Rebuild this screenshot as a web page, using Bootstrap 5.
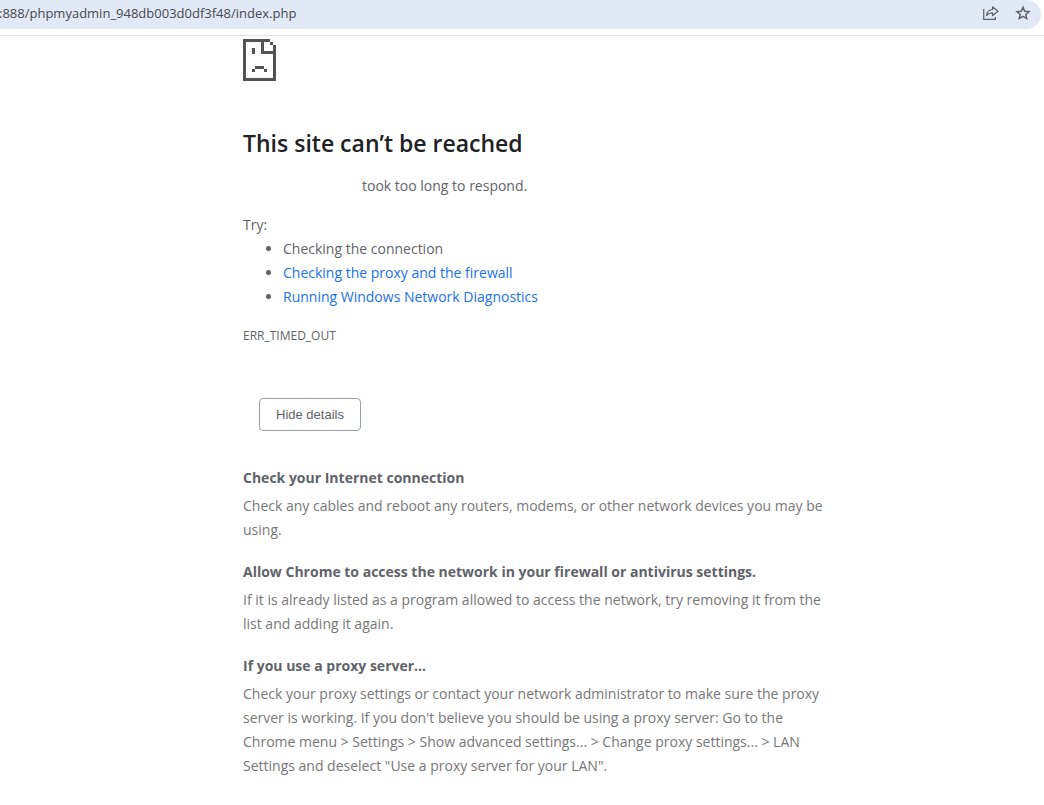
<!DOCTYPE html>
<html lang="en">
<head>
<meta charset="utf-8">
<meta name="viewport" content="width=device-width, initial-scale=1">
<title>This site can’t be reached</title>
<link rel="stylesheet" href="https://cdn.jsdelivr.net/npm/bootstrap@5.3.0/dist/css/bootstrap.min.css">
<style>
  body { font-family: "Open Sans", "Noto Sans", sans-serif; font-size: 14px; line-height: 24px; color: #5f6368; }
  .toolbar { height: 36px; border-bottom: 1px solid #dfe1e5; }
  .omnibox { height: 29px; background: #e1e8f6; border-radius: 0 15px 15px 0; margin-right: 3px; padding: 0 10px 3px 0; }
  .omnibox input { background: transparent; color: #474a4f; font-size: 13px; line-height: 20px; text-indent: -1px; outline: 0; }
  .tool { color: #5f6368; line-height: 0; }
  .page-shell { padding-left: 42px; }
  .error-page { max-width: 600px; padding-top: 3px; }
  .sad-page { display: block; margin-bottom: 48px; }
  h1 { font-size: 23px; line-height: 29px; font-weight: 600; color: #202124; margin-bottom: 16px; }
  .host { display: inline-block; width: 119px; }
  .summary, .tips { margin-bottom: 15px; }
  .tips { padding-left: 40px; }
  .tips a { color: #1a73e8; }
  .error-code { font-size: 12px; }
  .details-btn { --bs-btn-color: #5f6368; --bs-btn-border-color: #9aa0a6; --bs-btn-border-radius: 4px; --bs-btn-font-size: 13px; --bs-btn-line-height: 15px; --bs-btn-padding-y: 8px; --bs-btn-padding-x: 16px; font-family: "Liberation Sans", sans-serif; margin: 50px 0 35px 16px; }
  .details { padding-right: 8px; }
  .details h2 { font-size: 14px; line-height: 24px; font-weight: 700; margin-bottom: 4px; }
  .details p { color: #777; margin-bottom: 18px; }
</style>
</head>
<body>
<header class="toolbar">
  <div class="omnibox d-flex align-items-center">
    <input class="flex-grow-1 border-0 p-0" type="text" aria-label="Address" value=":888/phpmyadmin_948db003d0df3f48/index.php">
    <button class="tool btn border-0 p-0 me-3" type="button" aria-label="Share this page">
      <svg width="16" height="16" viewBox="0 0 16 16" fill="none" stroke="currentColor" stroke-width="1.2"><path d="M.7 4v10.4h11.6V12"/><path d="M3.5 10.5C4 6.800 6.300 4.800 9.500 4.500V1.800L15 6.200l-5.500 4.300V7.900C6.800 7.900 5 8.700 3.500 10.500z" stroke-linejoin="round"/></svg>
    </button>
    <button class="tool btn border-0 p-0" type="button" aria-label="Bookmark this page">
      <svg width="16" height="16" viewBox="0 0 16 16" fill="none" stroke="currentColor" stroke-width="1.500"><path d="M8 2.200l1.700 4 4.300.4-3.200 2.800.9 4.200L8 11.400l-3.700 2.200.9-4.200L2 6.600l4.300-.4z"/></svg>
    </button>
  </div>
</header>
<div class="page-shell">
  <main class="error-page mx-auto">
    <svg class="sad-page" width="33" height="42" viewBox="0 0 11 14" fill="#535353" shape-rendering="crispEdges" aria-hidden="true"><path d="M0 0h9v1H7v3h3V2h1v12H0zM1 1v12h9V5H6V1zM9 1h1v1H9zM3 3h1v2H3zM4 9h3v1H4zM3 10h1v1H3zM7 10h1v1H7z" fill-rule="evenodd"/></svg>
    <h1>This site can’t be reached</h1>
    <p class="summary"><span class="host"></span>took too long to respond.</p>
    <p class="mb-0">Try:</p>
    <ul class="tips">
      <li>Checking the connection</li>
      <li><a class="text-decoration-none" href="#proxy">Checking the proxy and the firewall</a></li>
      <li><a class="text-decoration-none" href="#diagnostics">Running Windows Network Diagnostics</a></li>
    </ul>
    <p class="error-code mb-0">ERR_TIMED_OUT</p>
    <button class="btn details-btn" type="button">Hide details</button>
    <section class="details">
      <h2>Check your Internet connection</h2>
      <p>Check any cables and reboot any routers, modems, or other network devices you may be using.</p>
      <h2>Allow Chrome to access the network in your firewall or antivirus settings.</h2>
      <p>If it is already listed as a program allowed to access the network, try removing it from the list and adding it again.</p>
      <h2 id="proxy">If you use a proxy server...</h2>
      <p>Check your proxy settings or contact your network administrator to make sure the proxy server is working. If you don't believe you should be using a proxy server: Go to the Chrome menu &gt; Settings &gt; Show advanced settings... &gt; Change proxy settings... &gt; LAN Settings and deselect "Use a proxy server for your LAN".</p>
    </section>
  </main>
</div>
<script src="https://cdn.jsdelivr.net/npm/bootstrap@5.3.0/dist/js/bootstrap.bundle.min.js"></script>
</body>
</html>
